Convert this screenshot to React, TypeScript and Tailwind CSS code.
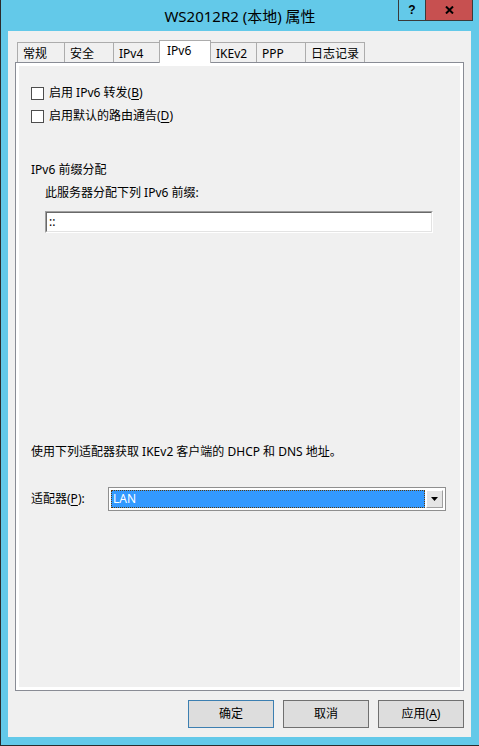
import React from "react";

const font = { fontFamily: '"Noto Sans", "Noto Sans CJK SC", sans-serif' };

function U({ children }: { children: React.ReactNode }) {
  return <span className="underline underline-offset-2">{children}</span>;
}

function Checkbox({ label }: { label: React.ReactNode }) {
  return (
    <div className="flex items-center h-[16px]">
      <div className="w-[13px] h-[13px] border border-[#4d4d4d] bg-white shrink-0" />
      <span className="ml-[5px] text-[12px] leading-[16px] text-black">{label}</span>
    </div>
  );
}

const tabs: { label: string; cls: string; sel?: boolean }[] = [
  { label: "常规", cls: "w-[48px]" },
  { label: "安全", cls: "w-[50px] -ml-px" },
  { label: "IPv4", cls: "w-[48px] -ml-px" },
  { label: "IPv6", cls: "w-[52px] -ml-[2px]", sel: true },
  { label: "IKEv2", cls: "w-[47px] -ml-px" },
  { label: "PPP", cls: "w-[50px] -ml-px" },
  { label: "日志记录", cls: "w-[60px] -ml-px" },
];

export default function App() {
  return (
    <div
      className="w-[479px] h-[746px] bg-[#63c9e9] border-l border-b border-[#2b2b2b] flex flex-col text-black"
      style={font}
    >
      {/* Title bar */}
      <div className="h-[31px] relative flex items-center justify-center shrink-0">
        <span className="text-[15px] leading-[20px] text-black">WS2012R2 (本地) 属性</span>
        <div className="absolute top-0 right-[6px] flex h-[21px]">
          <div className="w-[28px] h-full border border-t-0 border-[#3a3a3a] flex items-center justify-center">
            <span
              className="text-[12px] font-bold leading-none text-black"
              style={{ fontFamily: '"Liberation Sans", sans-serif' }}
            >
              ?
            </span>
          </div>
          <div className="w-[47px] h-full border border-t-0 border-l-0 border-[#3a3a3a] bg-[#c75050] flex items-center justify-center">
            <svg width="9" height="8" viewBox="0 0 9 8">
              <path d="M1 0.5 L8 7.5 M8 0.5 L1 7.5" stroke="#000" strokeWidth="2" />
            </svg>
          </div>
        </div>
      </div>

      {/* Client area */}
      <div className="ml-[7px] w-[463px] h-[706px] bg-[#f0f0f0] flex flex-col pt-[9px] px-[7px]">
        {/* Tabs */}
        <div className="flex items-end h-[22px] pl-[2px] shrink-0">
          {tabs.map((t) =>
            t.sel ? (
              <div
                key={t.label}
                className={`${t.cls} h-[23px] -mb-px relative z-10 bg-white border border-b-0 border-[#acacac] pl-[7px] pt-[2px] text-[12px] leading-[16px]`}
              >
                {t.label}
              </div>
            ) : (
              <div
                key={t.label}
                className={`${t.cls} h-[20px] bg-[#f0f0f0] border border-b-0 border-[#acacac] pl-[5px] pt-[3px] text-[12px] leading-[16px]`}
              >
                {t.label}
              </div>
            )
          )}
        </div>

        {/* Panel */}
        <div className="w-[449px] h-[629px] border border-[#898c95] shrink-0">
          <div className="w-full h-full border-[3px] border-white bg-[#f0f0f0] flex flex-col px-[12px]">
            <div className="mt-[19px]">
              <Checkbox label={<>启用 IPv6 转发(<U>B</U>)</>} />
            </div>
            <div className="mt-[7px]">
              <Checkbox label={<>启用默认的路由通告(<U>D</U>)</>} />
            </div>
            <div className="mt-[38px] h-[16px] text-[12px] leading-[16px]">IPv6 前缀分配</div>
            <div className="mt-[7px] ml-[14px] h-[16px] text-[12px] leading-[16px]">此服务器分配下列 IPv6 前缀:</div>
            <div className="mt-[10px] ml-[14px] w-[388px] h-[22px] border border-t-[#a0a0a0] border-l-[#a0a0a0] border-b-white border-r-white">
              <div className="w-full h-full border border-t-[#696969] border-l-[#696969] border-b-[#e3e3e3] border-r-[#e3e3e3] bg-white flex items-center pl-[2px]">
                <span className="text-[12px] leading-[16px]">::</span>
              </div>
            </div>
            <div className="mt-[211px] h-[16px] text-[12px] leading-[16px]">
              使用下列适配器获取 IKEv2 客户端的 DHCP 和 DNS 地址。
            </div>
            <div className="mt-[27px] flex items-center">
              <div className="w-[77px] text-[12px] leading-[16px]">
                适配器(<U>P</U>):
              </div>
              <div className="w-[338px] h-[24px] border border-[#8f8f8f] bg-white p-[2px] flex">
                <div className="flex-1 h-full bg-[#3399ff] border border-dotted border-[#5a3b10] flex items-center pl-[1px]">
                  <span className="text-[12px] leading-[16px] text-white">LAN</span>
                </div>
                <div className="w-[17px] h-full ml-[1px] bg-[#e5e5e5] border border-t-white border-l-white border-b-[#a0a0a0] border-r-[#a0a0a0] flex items-center justify-center">
                  <svg width="7" height="4" viewBox="0 0 7 4">
                    <path d="M0 0 H7 L3.5 4 Z" fill="#000" />
                  </svg>
                </div>
              </div>
            </div>
          </div>
        </div>

        {/* Buttons */}
        <div className="mt-[9px] flex justify-end gap-[9px] shrink-0">
          <div className="w-[86px] h-[28px] border border-[#3c7fb1] bg-[#dddddd] flex items-center justify-center text-[12px] leading-[16px]">
            确定
          </div>
          <div className="w-[86px] h-[28px] border border-[#707070] bg-[#dddddd] flex items-center justify-center text-[12px] leading-[16px]">
            取消
          </div>
          <div className="w-[86px] h-[28px] border border-[#707070] bg-[#dddddd] flex items-center justify-center text-[12px] leading-[16px]">
            应用(<U>A</U>)
          </div>
        </div>
      </div>
    </div>
  );
}
